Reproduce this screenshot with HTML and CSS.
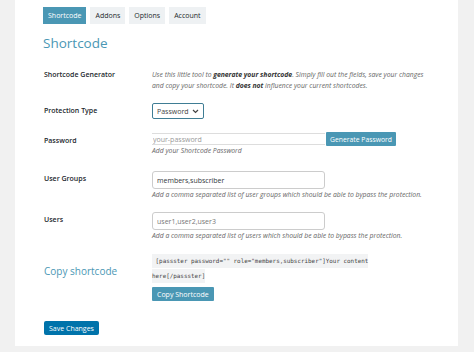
FILE: index.html
```html
<!DOCTYPE html>
<html lang="en">
<head>
  <meta charset="UTF-8" />
  <title>Passster Shortcode</title>
  <link rel="stylesheet" href="styles.css">
</head>
<body>
  <div class="wrap">
    <nav class="tabs">
      <a class="tab active">Shortcode</a>
      <a class="tab">Addons</a>
      <a class="tab">Options</a>
      <a class="tab">Account</a>
    </nav>

    <h1 class="page-title">Shortcode</h1>

    <div class="form-table">
      <div class="row">
        <div class="label label-intro">Shortcode Generator</div>
        <div class="field">
          <p class="desc desc-intro">Use this little tool to <b>generate your shortcode</b>. Simply fill out the fields, save your changes and copy your shortcode. It <b>does not</b> influence your current shortcodes.</p>
        </div>
      </div>

      <div class="row">
        <div class="label">Protection Type</div>
        <div class="field">
          <div class="select">Password <svg width="7" height="5" viewBox="0 0 7 5"><path d="M1 1l2.5 2.5L6 1" fill="none" stroke="#444" stroke-width="1.2"/></svg></div>
        </div>
      </div>

      <div class="row row-password">
        <div class="label label-password">Password</div>
        <div class="field">
          <div class="inline">
            <input class="input input-flat" type="text" placeholder="your-password">
            <button class="btn btn-teal">Generate Password</button>
          </div>
          <p class="desc">Add your Shortcode Password</p>
        </div>
      </div>

      <div class="row row-groups">
        <div class="label">User Groups</div>
        <div class="field">
          <input class="input" type="text" value="members,subscriber">
          <p class="desc">Add a comma separated list of user groups which should be able to bypass the protection.</p>
        </div>
      </div>

      <div class="row">
        <div class="label">Users</div>
        <div class="field">
          <input class="input" type="text" placeholder="user1,user2,user3">
          <p class="desc">Add a comma separated list of users which should be able to bypass the protection.</p>
        </div>
      </div>

      <div class="row">
        <div class="label label-copy">Copy shortcode</div>
        <div class="field">
          <p class="code-wrap"><code class="code">&nbsp;[passster password="" role="members,subscriber"]Your content here[/passster]</code></p>
          <button class="btn btn-teal btn-copy">Copy Shortcode</button>
        </div>
      </div>
    </div>

    <button class="btn btn-primary">Save Changes</button>
  </div>
</body>
</html>
```

FILE: styles.css
```css
* { margin: 0; padding: 0; box-sizing: border-box; }
body {
  background: #f1f1f1;
  font-family: 'Open Sans', 'Noto Sans', sans-serif;
  font-size: 7.5px;
  color: #23282d;
  padding: 0 16px 0 15px;
}
.wrap {
  background: #fff;
  height: 346px;
  padding: 7px 28px 0 28px;
}
.tabs { display: flex; gap: 4px; }
.tab {
  background: #eef1f3;
  color: #23282d;
  padding: 0 5px;
  height: 17px;
  line-height: 17px;
  font-size: 7px;
}
.tab.active { background: #4a97b4; color: #fff; }
.page-title {
  color: #4a97b4;
  font-weight: 400;
  font-size: 13.5px;
  line-height: 20px;
  margin-top: 9px;
}
.form-table {
  margin-top: 16px;
  display: flex;
  flex-direction: column;
  gap: 12px;
}
.row { display: flex; }
.row-password { margin-top: 1px; }
.row-groups { margin-top: 3px; }
.label {
  width: 109px;
  flex: none;
  padding-left: 1px;
  font-weight: 600;
  font-size: 7px;
  line-height: 16px;
}
.label-intro { line-height: 11px; }
.label-password { padding-top: 1px; }
.field { flex: 1; }
.desc {
  font-style: italic;
  color: #666;
  font-size: 6.8px;
  line-height: 10px;
}
.desc b { color: #333; }
.desc-intro { line-height: 11px; }
.input + .desc { margin-top: 1px; }
.select {
  display: inline-flex;
  align-items: center;
  gap: 3px;
  border: 1.5px solid #3f7d94;
  border-radius: 2px;
  height: 16px;
  padding: 0 4px;
  font-size: 7px;
  color: #444;
}
.inline { display: flex; align-items: center; }
.input {
  display: block;
  width: 173px;
  height: 18px;
  border: 1px solid #ccc;
  border-radius: 3px;
  padding: 0 4px;
  font: inherit;
  font-size: 7px;
  color: #32373c;
}
.input::placeholder { color: #777; }
.input-flat {
  height: 12px;
  border: none;
  border-top: 1px solid #ddd;
  border-bottom: 1px solid #ddd;
  border-radius: 0;
  padding: 0 1px;
  color: #999;
}
.input-flat::placeholder { color: #999; }
.btn {
  border: none;
  border-radius: 1px;
  font: inherit;
  font-size: 7px;
  color: #fff;
  padding: 0 5px;
  height: 14px;
}
.btn-teal { background: #4a97b4; }
.inline .btn { margin-left: 1px; padding: 0 4px; font-size: 6.8px; }
.label-copy {
  color: #4a97b4;
  font-weight: 400;
  font-size: 10px;
  padding-top: 10px;
}
.code-wrap {
  width: 222px;
  line-height: 14px;
}
.code {
  background: #f2f3f4;
  font-family: 'DejaVu Sans Mono', monospace;
  font-size: 5.9px;
  color: #444;
  padding: 4px 0;
}
.btn-copy { margin-top: 4px; display: block; }
.btn-primary {
  background: #0073aa;
  margin: 20px 0 0 1px;
  height: 14px;
  padding: 0 5px;
  border-radius: 2px;
}
```
